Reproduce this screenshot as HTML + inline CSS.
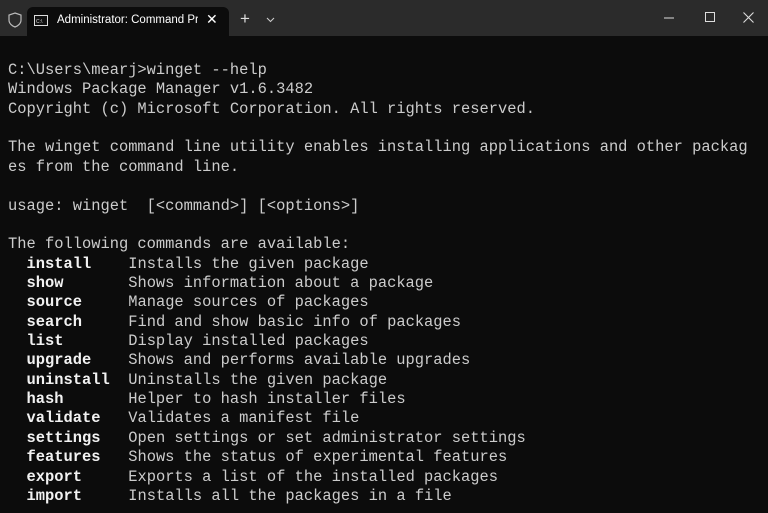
<!DOCTYPE html>
<html><head><style>
html,body{margin:0;padding:0;width:768px;height:513px;overflow:hidden;background:#0c0c0c;}
.bar{position:absolute;left:0;top:0;width:768px;height:36px;background:#2b2b2b;}
.tab{position:absolute;left:27px;top:7px;width:202px;height:29px;background:#0c0c0c;border-radius:6px 6px 0 0;}
.t{font-family:"Liberation Sans",sans-serif;color:#fff;font-size:11.5px;position:absolute;}
pre{position:absolute;left:8px;top:61px;margin:0;font-family:"Liberation Mono",monospace;font-size:15.42px;line-height:19.36px;color:#cccccc;}
b{color:#f2f2f2;}
</style></head><body>
<div class="bar"></div>
<svg style="position:absolute;left:8px;top:12px" width="14" height="16" viewBox="0 0 14 16"><path d="M7 1 L13 3 V8 C13 11.5 10 14 7 15 C4 14 1 11.5 1 8 V3 Z" fill="none" stroke="#bbb" stroke-width="1.2"/></svg>
<div class="tab"></div>
<svg style="position:absolute;left:34px;top:15px" width="14" height="11" viewBox="0 0 14 11"><rect x="0.5" y="0.5" width="13" height="10" fill="#111" stroke="#ddd"/><text x="2" y="8" font-size="5" fill="#ddd" font-family="Liberation Sans">C:\</text></svg>
<div class="t" style="left:57px;top:14px;width:141px;overflow:hidden;white-space:nowrap;">Administrator: Command Prompt</div>
<div class="t" style="left:206px;top:11px;font-size:14px;">✕</div>
<div class="t" style="left:240px;top:9px;font-size:17px;color:#ddd">+</div>
<svg style="position:absolute;left:266px;top:17px" width="9" height="6"><path d="M1 1 L4.5 4.5 L8 1" fill="none" stroke="#ccc" stroke-width="1.1"/></svg>
<svg style="position:absolute;left:664px;top:17px" width="10" height="2"><path d="M0 1 H10" stroke="#ddd"/></svg>
<svg style="position:absolute;left:705px;top:12px" width="10" height="10"><rect x="0.5" y="0.5" width="9" height="9" fill="none" stroke="#ddd"/></svg>
<svg style="position:absolute;left:743px;top:12px" width="11" height="11"><path d="M0.5 0.5 L10.5 10.5 M10.5 0.5 L0.5 10.5" stroke="#ddd" stroke-width="1.1"/></svg>
<pre>C:\Users\mearj&gt;winget --help
Windows Package Manager v1.6.3482
Copyright (c) Microsoft Corporation. All rights reserved.

The winget command line utility enables installing applications and other packag
es from the command line.

usage: winget  [&lt;command&gt;] [&lt;options&gt;]

The following commands are available:
  <b>install</b>    Installs the given package
  <b>show</b>       Shows information about a package
  <b>source</b>     Manage sources of packages
  <b>search</b>     Find and show basic info of packages
  <b>list</b>       Display installed packages
  <b>upgrade</b>    Shows and performs available upgrades
  <b>uninstall</b>  Uninstalls the given package
  <b>hash</b>       Helper to hash installer files
  <b>validate</b>   Validates a manifest file
  <b>settings</b>   Open settings or set administrator settings
  <b>features</b>   Shows the status of experimental features
  <b>export</b>     Exports a list of the installed packages
  <b>import</b>     Installs all the packages in a file</pre>
</body></html>
